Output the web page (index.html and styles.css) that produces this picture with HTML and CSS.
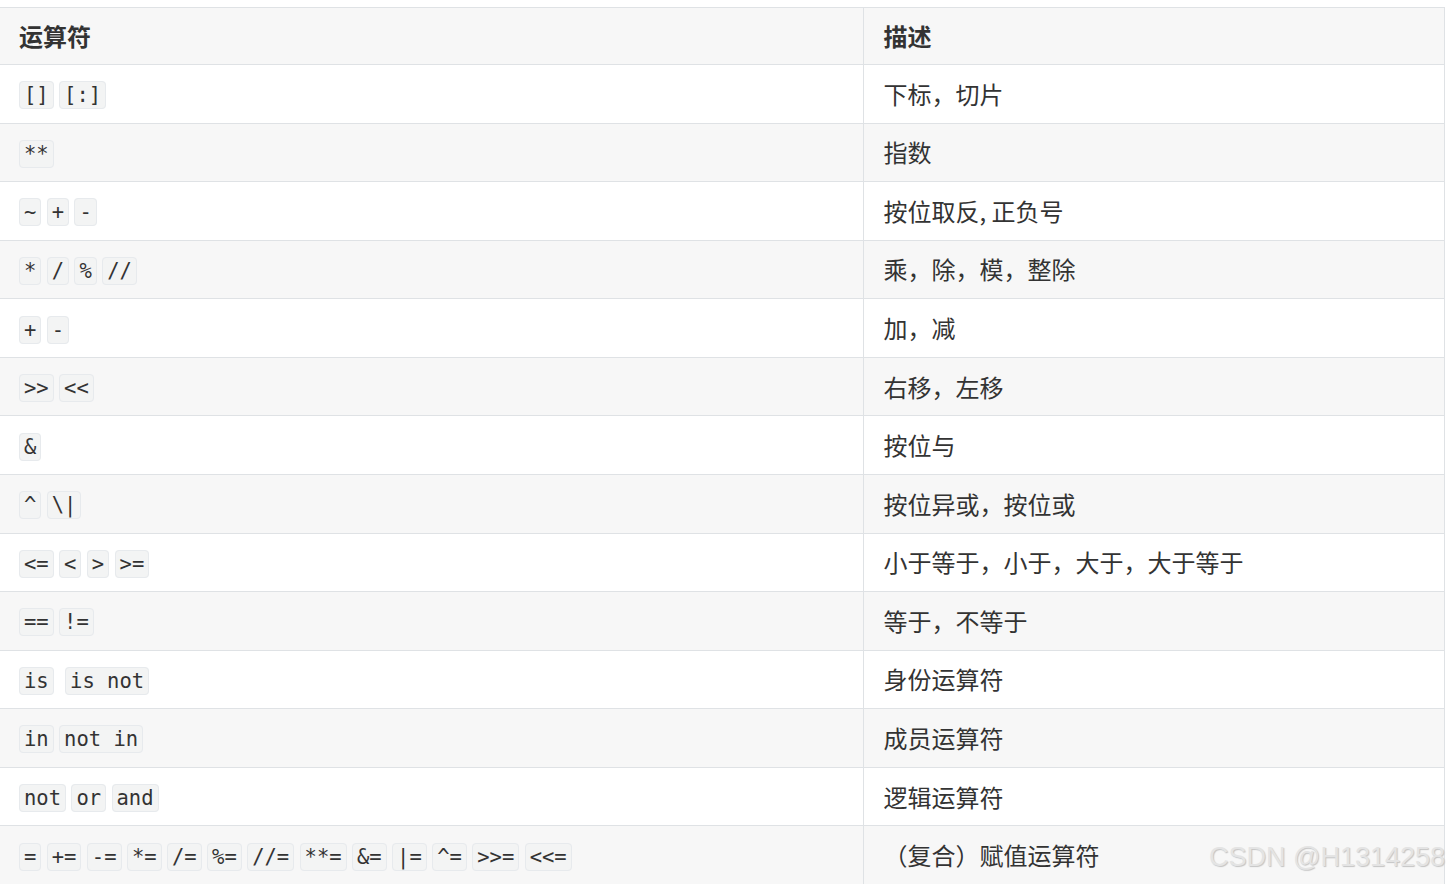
FILE: index.html
```html
<!DOCTYPE html>
<html>
    <head>
    <meta charset="utf-8">
    <meta name="viewport" content="width=device-width, initial-scale=1.0">
    <title>运算符优先级</title>
    <link rel="stylesheet" href="styles.css">
    </head>
    <body>
    <table class="ops">
        <colgroup>
            <col class="c1">
            <col class="c2">
        </colgroup>
        <thead>
            <tr><th>运算符</th><th>描述</th></tr>
        </thead>
        <tbody>
            <tr><td><code>[]</code> <code>[:]</code></td><td>下标，切片</td></tr>
            <tr><td><code>**</code></td><td>指数</td></tr>
            <tr><td><code>~</code> <code>+</code> <code>-</code></td><td>按位取反, 正负号</td></tr>
            <tr><td><code>*</code> <code>/</code> <code>%</code> <code>//</code></td><td>乘，除，模，整除</td></tr>
            <tr><td><code>+</code> <code>-</code></td><td>加，减</td></tr>
            <tr><td><code>&gt;&gt;</code> <code>&lt;&lt;</code></td><td>右移，左移</td></tr>
            <tr><td><code>&amp;</code></td><td>按位与</td></tr>
            <tr><td><code>^</code> <code>\|</code></td><td>按位异或，按位或</td></tr>
            <tr><td><code>&lt;=</code> <code>&lt;</code> <code>&gt;</code> <code>&gt;=</code></td><td>小于等于，小于，大于，大于等于</td></tr>
            <tr><td><code>==</code> <code>!=</code></td><td>等于，不等于</td></tr>
            <tr><td><code>is</code> <code class="wide">is not</code></td><td>身份运算符</td></tr>
            <tr><td><code>in</code> <code>not in</code></td><td>成员运算符</td></tr>
            <tr><td><code>not</code> <code>or</code> <code>and</code></td><td>逻辑运算符</td></tr>
            <tr><td><code>=</code> <code>+=</code> <code>-=</code> <code>*=</code> <code>/=</code> <code>%=</code> <code>//=</code> <code>**=</code> <code>&amp;=</code> <code>|=</code> <code>^=</code> <code>&gt;&gt;=</code> <code>&lt;&lt;=</code></td><td>（复合）赋值运算符</td></tr>
        </tbody>
    </table>
    <div class="mark">CSDN @H1314258</div>
    </body>
</html>
```

FILE: styles.css
```css
body {
    margin: 0;
    padding: 0;
    overflow: hidden;
    color: #333;
    font-family: "Noto Sans CJK SC", "Noto Sans", sans-serif;
    font-size: 24px;
}
.ops {
    margin-top: 7px;
    width: 1445px;
    table-layout: fixed;
    border-collapse: collapse;
}
.c1 {
    width: 863px;
}
.ops tr {
    height: 58.57px;
}
.ops th,
.ops td {
    text-align: left;
    vertical-align: middle;
    padding: 0 19px;
    line-height: 30px;
    border-top: 1px solid #dfe2e5;
    border-bottom: 1px solid #dfe2e5;
    border-right: 1px solid #dfe2e5;
    white-space: nowrap;
}
.ops thead tr {
    height: 57px;
}
.ops th + th,
.ops td + td {
    padding-left: 20px;
}
.ops th {
    font-weight: bold;
    background-color: #f7f7f7;
}
.ops tbody tr:nth-child(even) {
    background-color: #f7f7f7;
}
.ops tbody tr:nth-child(odd) {
    background-color: #fff;
}
code {
    font-family: "DejaVu Sans Mono", "Liberation Mono", monospace;
    font-size: 20.5px;
    padding: 1px 4px;
    background-color: #f3f4f4;
    border: 1px solid #e7eaed;
    border-radius: 4px;
    color: #333;
}
code.wide {
    margin-left: 6px;
}
.mark {
    position: absolute;
    left: 1209px;
    top: 842px;
    font-family: "Liberation Sans", Arial, sans-serif;
    font-size: 27px;
    color: #e4e4e4;
    text-shadow: 1px 1px 1px #c4c4c4;
    white-space: nowrap;
}
```
